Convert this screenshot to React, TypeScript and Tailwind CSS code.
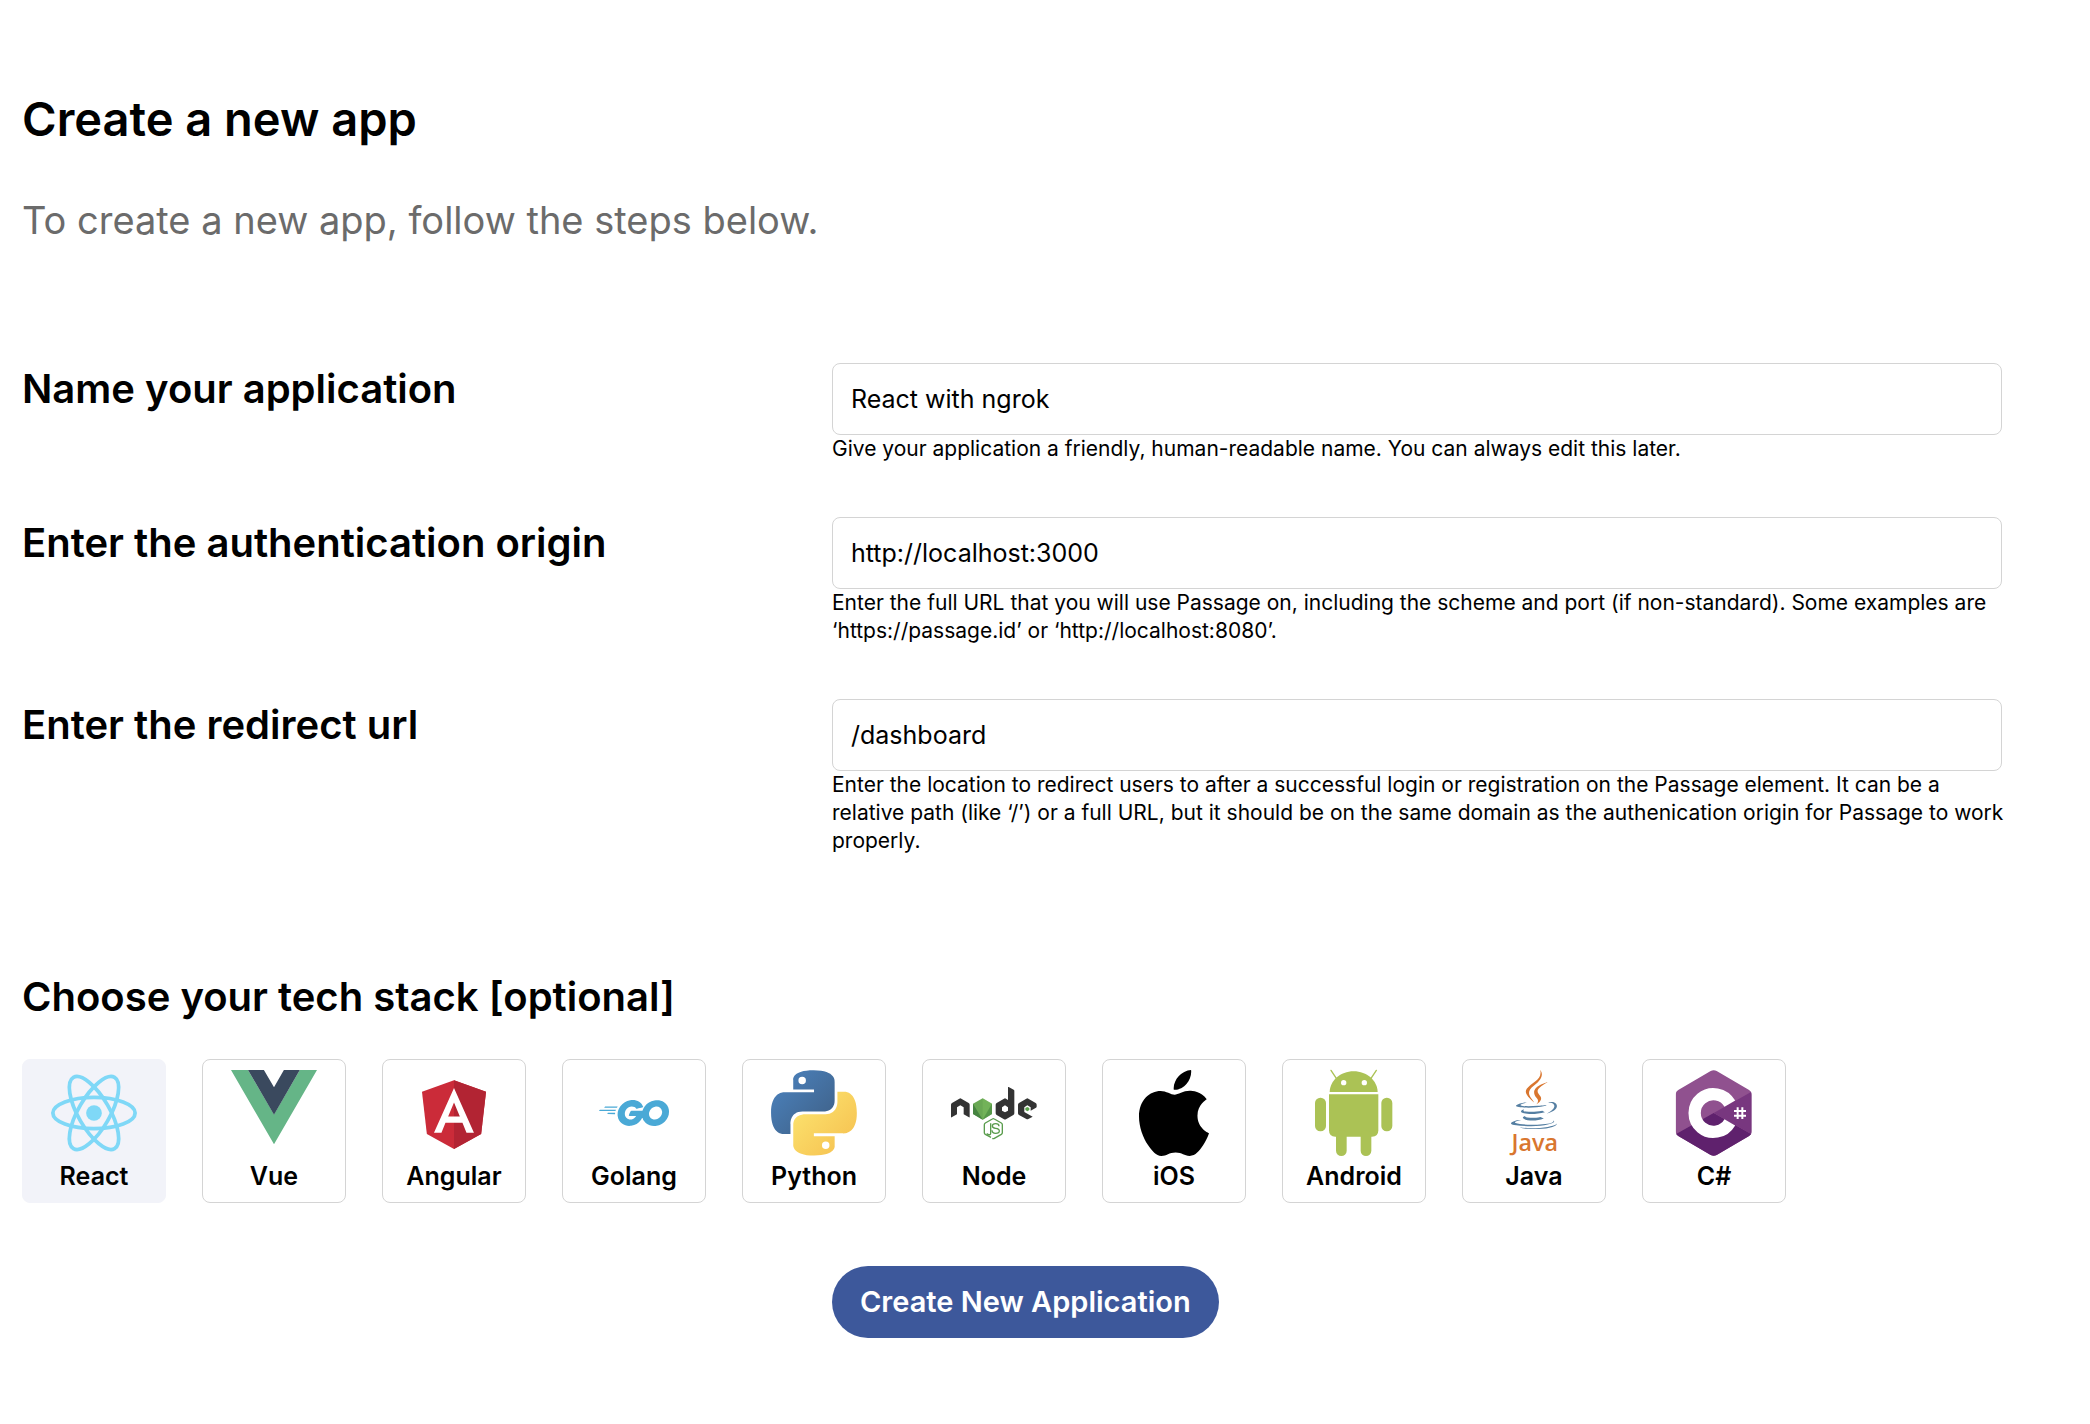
import { useState } from "react";
import type { ReactNode } from "react";
import { SiGo } from "react-icons/si";

const logoClass = "h-[86px] w-[86px] overflow-visible";

function ReactLogo() {
  return (
    <svg className={logoClass} viewBox="-11.5 -11.5 23 23" aria-hidden="true">
      <circle r="2.1" fill="#7fd8f7" />
      <g stroke="#7fd8f7" fill="none">
        <ellipse rx="11" ry="4.2" />
        <ellipse rx="11" ry="4.2" transform="rotate(60)" />
        <ellipse rx="11" ry="4.2" transform="rotate(120)" />
      </g>
    </svg>
  );
}

function VueLogo() {
  return (
    <svg className={logoClass} viewBox="0 0 256 256" aria-hidden="true">
      <path fill="#65b587" d="M0 0l128 220.8L256 0h-51.2L128 132.48 50.56 0z" />
      <path fill="#3a495e" d="M50.56 0L128 133.12 204.8 0h-47.36L128 51.2 97.92 0z" />
    </svg>
  );
}

function AngularLogo() {
  return (
    <svg className={logoClass} viewBox="0 0 250 250" aria-hidden="true">
      <path fill="#cb2b39" d="M125 30L31.900 63.200l14.200 123.100L125 230l78.900-43.700 14.200-123.100z" />
      <path fill="#b22433" d="M125 30v200l78.900-43.700 14.200-123.100z" />
      <path
        fill="#fff"
        d="M125 52.100L66.800 182.600h21.700l11.700-29.200h49.400l11.700 29.200H183zm17 83.300h-34l17-40.900z"
      />
    </svg>
  );
}

function GoLogo() {
  return (
    <span className="flex h-[86px] w-[86px] items-center justify-center text-[#4aa9d6]">
      <SiGo size={70} aria-hidden="true" />
    </span>
  );
}

function PythonLogo() {
  return (
    <svg className={logoClass} viewBox="0 0 256 255" aria-hidden="true">
      <defs>
        <linearGradient id="python-blue" x1="12%" y1="12%" x2="80%" y2="78%">
          <stop offset="0" stopColor="#4a80ba" />
          <stop offset="1" stopColor="#416690" />
        </linearGradient>
        <linearGradient id="python-yellow" x1="19%" y1="20%" x2="90%" y2="88%">
          <stop offset="0" stopColor="#fbdf6b" />
          <stop offset="1" stopColor="#f6c251" />
        </linearGradient>
      </defs>
      <path
        fill="url(#python-blue)"
        d="M126.916.072c-64.832 0-60.784 28.115-60.784 28.115l.072 29.128h61.868v8.745H41.631S.145 61.355.145 126.77c0 65.417 36.21 63.097 36.21 63.097h21.61v-30.356s-1.165-36.21 35.632-36.21h61.362s34.475.557 34.475-33.319V33.97S194.67.072 126.916.072zM92.802 19.66a11.12 11.12 0 0 1 11.13 11.13 11.12 11.12 0 0 1-11.13 11.13 11.12 11.12 0 0 1-11.13-11.13 11.12 11.12 0 0 1 11.13-11.13z"
      />
      <path
        fill="url(#python-yellow)"
        d="M128.757 254.126c64.832 0 60.784-28.115 60.784-28.115l-.072-29.127H127.6v-8.745h86.441s41.486 4.705 41.486-60.712c0-65.416-36.21-63.096-36.21-63.096h-21.61v30.355s1.165 36.21-35.632 36.21h-61.362s-34.475-.557-34.475 33.32v56.013s-5.235 33.897 62.518 33.897zm34.114-19.586a11.12 11.12 0 0 1-11.13-11.13 11.12 11.12 0 0 1 11.13-11.131 11.12 11.12 0 0 1 11.13 11.13 11.12 11.12 0 0 1-11.13 11.13z"
      />
    </svg>
  );
}

function NodeLogo() {
  return (
    <svg className={logoClass} viewBox="0 0 258 258" aria-hidden="true">
      <g fill="#333">
        <path d="M0 141V104Q0 101 3 99L25 86Q28 84 31 86L53 99Q56 101 56 104V141Q56 143 54 142L38 133V112L28 106L18 112V133L2 142Q0 143 0 141z" />
        <path
          fillRule="evenodd"
          d="M134 104Q134 101 137 99L159 86Q162 84 165 86L171 90V52Q171 50 173 51L188 59Q190 60 190 62V130Q190 133 187 135L165 148Q162 149 159 148L137 135Q134 133 134 130zM162 106L153 112V122L162 127L171 122V112z"
        />
        <path d="M257 104Q257 101 254 99L232 86Q229 84 226 86L204 99Q201 101 201 104V130Q201 133 204 135L226 147Q229 149 232 147L245 140L220 126V112L229 106L239 112V122L255 113Q257 112 257 110z" />
      </g>
      <path fill="#69a854" d="M95 85l28 16v31l-28 17-29-17v-31z" />
      <path fill="#7fbf5f" d="M95 85l28 16-28 48z" opacity=".45" />
      <path fill="#468441" d="M66 101l29 48-29-17z" />
      <path fill="#4f9145" d="M123 101v31l-28 17z" opacity=".7" />
      <path fill="#5ba34b" d="M229 111l6 3v6l-6 4-6-4v-6z" />
      <g fill="none" stroke="#5a9c4d" strokeWidth="4" strokeLinejoin="round">
        <path d="M120 202l-17-9q-3-2-3-5v-24q0-3 3-5l21-12q3-2 6 0l21 12q3 2 3 5v24q0 3-3 5l-21 12q-3 2-6 0" />
        <path d="M119 160v29q0 8-8 4l-4-2" />
        <path d="M144 169q0-8-10-8t-10 7q0 6 10 7 11 1 11 8 0 7-11 7t-11-9" />
      </g>
    </svg>
  );
}

function AppleLogo() {
  return (
    <svg className={logoClass} viewBox="0 0 814 1000" aria-hidden="true">
      <path d="M788.1 340.9c-5.8 4.5-108.2 62.2-108.2 190.5 0 148.4 130.3 200.9 134.2 202.2-.6 3.2-20.7 71.9-68.7 141.9-42.8 61.6-87.5 123.1-155.5 123.1s-85.5-39.5-164-39.5c-76.5 0-103.7 40.8-165.9 40.8s-105.6-57-155.5-127C46.7 790.7 0 663 0 541.8c0-194.4 126.4-297.5 250.8-297.5 66.1 0 121.2 43.4 162.7 43.4 39.5 0 101.1-46 176.3-46 28.5 0 130.9 2.6 198.3 99.2zm-234-181.5c31.1-36.9 53.1-88.1 53.1-139.3 0-7.1-.6-14.3-1.9-20.1-50.6 1.9-110.8 33.7-147.1 75.8-28.5 32.4-55.1 83.6-55.1 135.5 0 7.8 1.3 15.6 1.9 18.1 3.2.6 8.4 1.3 13.6 1.3 45.4 0 102.5-30.4 135.5-71.3z" />
    </svg>
  );
}

function AndroidLogo() {
  return (
    <svg className={logoClass} viewBox="0 0 258 258" aria-hidden="true">
      <g fill="#abc255">
        <path d="M56 66C57 32 88 4 128 4s71 28 72 62z" />
        <path d="M54 73h148v108q0 19-19 19H73q-19 0-19-19z" />
        <rect x="12" y="83" width="33" height="101" rx="16" />
        <rect x="211" y="83" width="33" height="101" rx="16" />
        <rect x="75" y="180" width="32" height="78" rx="16" />
        <rect x="149" y="180" width="32" height="78" rx="16" />
      </g>
      <path d="M60 1l16 24M196 1l-16 24" stroke="#abc255" strokeWidth="4" strokeLinecap="round" />
      <circle cx="98" cy="38" r="8" fill="#fff" />
      <circle cx="160" cy="38" r="8" fill="#fff" />
    </svg>
  );
}

function JavaLogo() {
  return (
    <svg className={logoClass} viewBox="0 0 258 258" aria-hidden="true">
      <g transform="translate(59 0) scale(.365 .346)">
        <path
          fill="#d9762f"
          d="M192.34 280.8c-19-42.7-83.1-80.2 0-145.8C296 53.2 242.84 0 242.84 0c21.5 84.5-75.6 110.1-110.7 162.6-23.9 35.9 11.7 74.4 60.2 118.2zm114.6-176.2c.1 0-175.2 43.8-91.5 140.2 24.7 28.4-6.5 54-6.5 54s62.7-32.4 33.9-72.9c-26.9-37.8-47.5-56.6 64.1-121.3z"
        />
        <path
          fill="#557fa2"
          d="M277.74 312.9c9.8-6.7 23.4-12.5 23.4-12.5s-38.7 7-77.2 10.2c-47.1 3.9-97.7 4.7-123.1 1.3-60.1-8 33-30.1 33-30.1s-36.1-2.4-80.6 19c-52.5 25.4 130 37 224.5 12.1zm23.1 62.2a12.19 12.19 0 0 1-2 2.6c128.3-33.7 81.1-118.9 19.8-97.3a17.33 17.33 0 0 0-8.2 6.3 70.45 70.45 0 0 1 11-3c31-6.5 75.5 41.5-20.6 91.4zM348 437.4s14.5 11.9-15.9 21.2c-57.9 17.5-240.8 22.8-291.6.7-18.3-7.9 16-19 26.8-21.3 11.2-2.4 17.7-2 17.7-2-20.3-14.3-131.3 28.1-56.4 40.2C232.84 509.4 401 461.3 348 437.4zM124.44 396c-78.7 22 47.9 67.4 148.1 24.5a185.89 185.89 0 0 1-28.2-13.8c-44.7 8.5-65.4 9.1-106 4.5-33.5-3.8-13.9-15.2-13.9-15.2zm179.8 97.2c-78.7 14.8-175.8 13.1-233.3 3.6 0-.1 11.8 9.7 72.4 13.6 92.2 5.9 233.8-3.3 237.1-46.9 0 0-6.4 16.5-76.2 29.7zM260.64 353c-59.2 11.4-93.5 11.1-136.8 6.6-33.5-3.5-11.6-19.7-11.6-19.7-86.8 28.8 48.2 61.4 169.5 25.9a60.37 60.37 0 0 1-21.1-12.8z"
        />
      </g>
      <text
        x="131"
        y="243"
        textAnchor="middle"
        fill="#d9762f"
        fontFamily="'Open Sans', sans-serif"
        fontSize="70"
        fontWeight="600"
      >
        Java
      </text>
    </svg>
  );
}

function CSharpLogo() {
  return (
    <svg className={logoClass} viewBox="0 0 258 258" aria-hidden="true">
      <defs>
        <clipPath id="csharp-hex">
          <path d="M119 3q9-5 18 0l96 56q9 5 9 15v110q0 10-9 15l-96 56q-9 5-18 0l-96-56q-9-5-9-15V74q0-10 9-15z" />
        </clipPath>
      </defs>
      <g clipPath="url(#csharp-hex)">
        <path fill="#90518f" d="M0 0h258v258H0z" />
        <path fill="#5f216d" d="M128 129L14 193v65h228v-65z" />
        <path fill="#78377f" d="M128 129l130-73v146z" />
      </g>
      <path
        d="M176.500 101a56.500 56.500 0 1 0 0 56"
        fill="none"
        stroke="#fff"
        strokeWidth="37"
      />
      <path
        d="M200 112v35M214 112v35M189 123h36M189 137h36"
        fill="none"
        stroke="#fff"
        strokeWidth="6"
      />
    </svg>
  );
}

type Tech = { name: string; logo: ReactNode };

const techs: Tech[] = [
  { name: "React", logo: <ReactLogo /> },
  { name: "Vue", logo: <VueLogo /> },
  { name: "Angular", logo: <AngularLogo /> },
  { name: "Golang", logo: <GoLogo /> },
  { name: "Python", logo: <PythonLogo /> },
  { name: "Node", logo: <NodeLogo /> },
  { name: "iOS", logo: <AppleLogo /> },
  { name: "Android", logo: <AndroidLogo /> },
  { name: "Java", logo: <JavaLogo /> },
  { name: "C#", logo: <CSharpLogo /> },
];

type FieldProps = { id: string; label: string; initial: string; help: string };

function Field({ id, label, initial, help }: FieldProps) {
  return (
    <div className="grid grid-cols-[9fr_13fr] items-start">
      <label htmlFor={id} className="text-[40px] leading-[52px] font-semibold">
        {label}
      </label>
      <div>
        <input
          id={id}
          type="text"
          defaultValue={initial}
          aria-describedby={`${id}-help`}
          className="block h-[72px] w-full rounded-lg border border-[#d4d4d4] bg-white px-[18px] text-[25px]"
        />
        <p id={`${id}-help`} className="-mr-2 text-[21px] leading-7">
          {help}
        </p>
      </div>
    </div>
  );
}

export default function App() {
  const [selected, setSelected] = useState("React");

  return (
    <main className="min-h-screen bg-white pt-[87px] pr-[88px] pb-20 pl-[22px] font-['Inter',sans-serif] text-black">
      <h1 className="text-[47px] leading-[64px] font-semibold">Create a new app</h1>
      <p className="mt-10 text-[38px] leading-[58px] text-[#6b6b6b]">
        To create a new app, follow the steps below.
      </p>

      <form className="mt-[114px]" onSubmit={(e) => e.preventDefault()}>
        <div className="flex flex-col gap-[54px]">
          <Field
            id="app-name"
            label="Name your application"
            initial="React with ngrok"
            help="Give your application a friendly, human-readable name. You can always edit this later."
          />
          <Field
            id="auth-origin"
            label="Enter the authentication origin"
            initial="http://localhost:3000"
            help="Enter the full URL that you will use Passage on, including the scheme and port (if non-standard). Some examples are ‘https://passage.id’ or ‘http://localhost:8080’."
          />
          <Field
            id="redirect-url"
            label="Enter the redirect url"
            initial="/dashboard"
            help="Enter the location to redirect users to after a successful login or registration on the Passage element. It can be a relative path (like ‘/’) or a full URL, but it should be on the same domain as the authenication origin for Passage to work properly."
          />
        </div>

        <h2 id="tech-stack" className="mt-29 text-[40px] leading-[52px] font-semibold">
          Choose your tech stack [optional]
        </h2>
        <div role="group" aria-labelledby="tech-stack" className="mt-9 flex flex-wrap gap-9">
          {techs.map(({ name, logo }) => (
            <button
              key={name}
              type="button"
              aria-pressed={selected === name}
              onClick={() => setSelected(name)}
              className={
                selected === name
                  ? "flex h-36 w-36 flex-col items-center rounded-lg border border-[#f2f3f9] bg-[#f2f3f9] pt-[10px]"
                  : "flex h-36 w-36 flex-col items-center rounded-lg border border-[#d4d4d4] bg-white pt-[10px]"
              }
            >
              {logo}
              <span className="text-[25px] leading-10 font-semibold">{name}</span>
            </button>
          ))}
        </div>

        <div className="mt-[63px] grid grid-cols-[9fr_13fr]">
          <button
            type="submit"
            className="col-start-2 h-[72px] justify-self-start rounded-full bg-[#3d589b] px-7 text-[29px] font-semibold text-white"
          >
            Create New Application
          </button>
        </div>
      </form>
    </main>
  );
}
